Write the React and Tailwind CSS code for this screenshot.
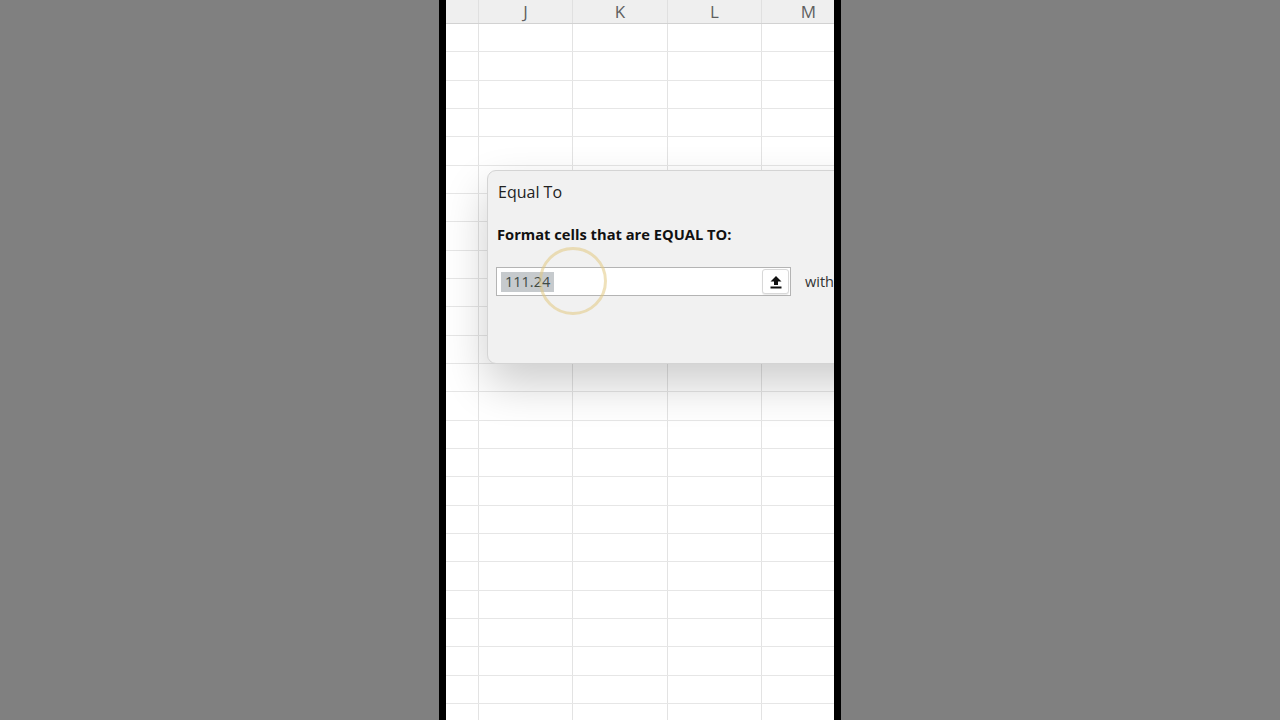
import React from 'react';

const cols = ['', 'J', 'K', 'L', 'M'];
const widths = ['w-[33px]', 'w-[94px]', 'w-[95px]', 'w-[94px]', 'w-[94px]'];

function UploadIcon() {
  return (
    <svg width="14" height="16" viewBox="0 0 14 16">
      <path d="M7 2 L12.5 7.5 L9 7.5 L9 11 L5 11 L5 7.5 L1.5 7.5 Z" fill="#111" />
      <rect x="1.5" y="12.5" width="11" height="2" fill="#111" />
    </svg>
  );
}

export default function App() {
  const rows = Array.from({ length: 25 });

  return (
    <div className="w-[1280px] h-[720px] bg-[#808080] flex justify-center overflow-hidden font-['Open_Sans',sans-serif]">
      <div className="w-[402px] h-full bg-black px-[7px]">
        <div className="relative h-full bg-white overflow-hidden">
          {/* column headers */}
          <div className="flex h-[24px] bg-[#efefef] border-b border-[#d2d2d2]">
            {cols.map((c, i) => (
              <div
                key={i}
                className={`${widths[i]} shrink-0 flex items-center justify-center text-[17px] leading-none text-[#5f5f5f] border-r border-[#e0e0e0]`}
              >
                {c}
              </div>
            ))}
          </div>

          {/* grid rows */}
          {rows.map((_, r) => (
            <div key={r} className="flex h-[28.33px] border-b border-[#e6e6e6]">
              {cols.map((c, i) => (
                <div key={i} className={`${widths[i]} shrink-0 border-r border-[#e3e3e3]`} />
              ))}
            </div>
          ))}

          {/* dialog */}
          <div className="absolute left-[41px] top-[170px] w-[400px] h-[194px] bg-[#f1f1f1] border border-[#d4d4d4] rounded-[9px] shadow-[0_20px_45px_rgba(0,0,0,0.2)]">
            <div className="pl-[10px] pt-[11px] text-[16px] leading-[20px] text-[#222]">Equal To</div>
            <div className="pl-[9px] pt-[23px] text-[14.7px] leading-[18px] font-bold text-[#111]">
              Format cells that are EQUAL TO:
            </div>
            <div className="flex items-center pl-[8px] pt-[24px]">
              <div className="w-[295px] h-[29px] bg-white border border-[#b4b4b4] flex items-center justify-between pl-[4px] pr-[1px]">
                <span className="bg-[#c6cacd] text-[#3f4a44] text-[14.5px] leading-[20px] px-[4px]">111.24</span>
                <div className="w-[27px] h-[25px] bg-white border border-[#d8d8d8] rounded-[3px] shadow-[0_1px_1px_rgba(0,0,0,0.08)] flex items-center justify-center">
                  <UploadIcon />
                </div>
              </div>
              <span className="ml-[14px] text-[14.5px] text-[#333]">with</span>
            </div>
          </div>

          {/* click highlight */}
          <div className="absolute left-[93px] top-[247px] w-[68px] h-[68px] rounded-full border-[3px] border-[rgba(225,200,130,0.55)]" />
        </div>
      </div>
    </div>
  );
}
